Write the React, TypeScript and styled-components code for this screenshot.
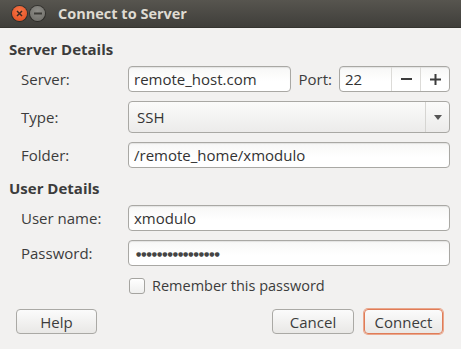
import React from 'react'
import styled, { createGlobalStyle } from 'styled-components'

const GlobalStyle = createGlobalStyle`
  html, body {
    margin: 0;
    padding: 0;
    background: #f2f1f0;
  }
  body {
    font-family: 'Open Sans', 'DejaVu Sans', sans-serif;
    color: #3c3c3c;
  }
`

const Window = styled.div`
  width: 461px;
  height: 349px;
  background: #f2f1f0;
  overflow: hidden;
`

const TitleBar = styled.div`
  height: 28px;
  display: flex;
  align-items: center;
  padding-left: 12px;
  background: linear-gradient(#57554f, #3f3e3a);
  border-bottom: 1px solid #35342f;
  box-sizing: border-box;
`

const WinButton = styled.span<{ close?: boolean }>`
  width: 15px;
  height: 15px;
  border-radius: 50%;
  margin-right: 3px;
  display: flex;
  align-items: center;
  justify-content: center;
  background: ${(p) =>
    p.close
      ? 'radial-gradient(circle at 50% 35%, #f7784a, #e0491c)'
      : 'radial-gradient(circle at 50% 35%, #8e8d88, #6c6b66)'};
  box-shadow: 0 0 0 1px rgba(0, 0, 0, 0.35);
`

const Title = styled.span`
  margin-left: 10px;
  font-weight: bold;
  font-size: 14.5px;
  color: #dfdbd2;
`

const Body = styled.div`
  padding: 11px 11px 0 9px;
`

const SectionTitle = styled.div<{ spaced?: boolean }>`
  height: 20px;
  line-height: 20px;
  font-weight: bold;
  font-size: 15px;
  color: #3c3c3c;
  margin-top: ${(p) => (p.spaced ? '10px' : '0')};
  margin-bottom: 7px;
`

const Form = styled.div`
  display: grid;
  grid-template-columns: 119px 1fr;
  row-gap: 9px;
  align-items: center;
`

const Label = styled.label`
  padding-left: 12px;
  font-size: 15px;
  color: #3c3c3c;
`

const Field = styled.div<{ tall?: boolean }>`
  height: ${(p) => (p.tall ? '32px' : '26px')};
  box-sizing: border-box;
  border: 1px solid #a9a8a4;
  border-radius: 4px;
  background: linear-gradient(#f7f7f6, #ffffff 60%);
  box-shadow: inset 0 1px 1px rgba(0, 0, 0, 0.08);
  display: flex;
  align-items: center;
  padding-left: 5px;
  font-size: 15px;
  color: #333;
`

const Combo = styled(Field)`
  background: linear-gradient(#fbfbfa, #ecebea);
  box-shadow: none;
  padding-left: 0;
`

const ComboText = styled.span`
  flex: 1;
  padding-left: 8px;
`

const ComboArrow = styled.span`
  width: 23px;
  height: 100%;
  border-left: 1px solid #d6d5d2;
  display: flex;
  align-items: center;
  justify-content: center;
`

const ServerRow = styled.div`
  display: flex;
  align-items: center;
`

const PortLabel = styled.span`
  margin: 0 7px 0 8px;
  font-size: 15px;
  color: #3c3c3c;
`

const Spin = styled(Field)`
  width: 111px;
  flex: none;
  padding-left: 0;
`

const SpinValue = styled.span`
  flex: 1;
  padding-left: 5px;
`

const SpinButton = styled.span`
  width: 28px;
  height: 100%;
  border-left: 1px solid #dcdbd8;
  display: flex;
  align-items: center;
  justify-content: center;
`

const Dots = styled.span`
  font-family: 'DejaVu Sans', sans-serif;
  font-size: 6px;
  letter-spacing: 0;
  color: #444;
  padding-left: 2px;
`

const CheckRow = styled.div`
  display: flex;
  align-items: center;
  margin: 12px 0 0 120px;
  height: 15px;
`

const Box = styled.span`
  width: 14px;
  height: 14px;
  border: 1px solid #a5a4a0;
  border-radius: 3px;
  background: linear-gradient(#ffffff, #efefee);
  margin-right: 7px;
`

const CheckText = styled.span`
  font-size: 14.5px;
  color: #3c3c3c;
`

const Buttons = styled.div`
  display: flex;
  align-items: center;
  margin: 16px 18px 0 16px;
`

const Spacer = styled.div`
  flex: 1;
`

const Button = styled.button<{ w: number; primary?: boolean }>`
  width: ${(p) => p.w}px;
  height: 25px;
  box-sizing: border-box;
  border: 1px solid ${(p) => (p.primary ? '#e07c58' : '#aaa9a5')};
  box-shadow: ${(p) => (p.primary ? '0 0 0 1px #eaa78c' : 'none')};
  border-radius: 4px;
  background: linear-gradient(#fbfbfb, #e9e8e6);
  font-family: 'Open Sans', 'DejaVu Sans', sans-serif;
  font-size: 15px;
  color: #3c3c3c;
  padding: 0;
  margin-left: ${(p) => (p.primary ? '10px' : '0')};
`

export default function App() {
  return (
    <Window>
      <GlobalStyle />
      <TitleBar>
        <WinButton close>
          <svg width="7" height="7" viewBox="0 0 7 7">
            <path d="M1 1 L6 6 M6 1 L1 6" stroke="#3b2a22" strokeWidth="1.5" />
          </svg>
        </WinButton>
        <WinButton>
          <svg width="8" height="3" viewBox="0 0 8 3">
            <rect x="0" y="0.5" width="8" height="2" fill="#3c3b37" />
          </svg>
        </WinButton>
        <Title>Connect to Server</Title>
      </TitleBar>
      <Body>
        <SectionTitle>Server Details</SectionTitle>
        <Form>
          <Label>Server:</Label>
          <ServerRow>
            <Field style={{ flex: 1 }}>remote_host.com</Field>
            <PortLabel>Port:</PortLabel>
            <Spin>
              <SpinValue>22</SpinValue>
              <SpinButton>
                <svg width="11" height="2" viewBox="0 0 11 2">
                  <rect width="11" height="2" fill="#3c3c3c" />
                </svg>
              </SpinButton>
              <SpinButton>
                <svg width="11" height="11" viewBox="0 0 11 11">
                  <rect y="4.5" width="11" height="2" fill="#3c3c3c" />
                  <rect x="4.5" width="2" height="11" fill="#3c3c3c" />
                </svg>
              </SpinButton>
            </Spin>
          </ServerRow>
          <Label>Type:</Label>
          <Combo tall>
            <ComboText>SSH</ComboText>
            <ComboArrow>
              <svg width="8" height="5" viewBox="0 0 8 5">
                <path d="M0 0 H8 L4 5 Z" fill="#555" />
              </svg>
            </ComboArrow>
          </Combo>
          <Label>Folder:</Label>
          <Field>/remote_home/xmodulo</Field>
        </Form>
        <SectionTitle spaced>User Details</SectionTitle>
        <Form>
          <Label>User name:</Label>
          <Field>xmodulo</Field>
          <Label>Password:</Label>
          <Field>
            <Dots>{'●'.repeat(16)}</Dots>
          </Field>
        </Form>
        <CheckRow>
          <Box />
          <CheckText>Remember this password</CheckText>
        </CheckRow>
      </Body>
      <Buttons>
        <Button w={81}>Help</Button>
        <Spacer />
        <Button w={82}>Cancel</Button>
        <Button w={79} primary>
          Connect
        </Button>
      </Buttons>
    </Window>
  )
}
